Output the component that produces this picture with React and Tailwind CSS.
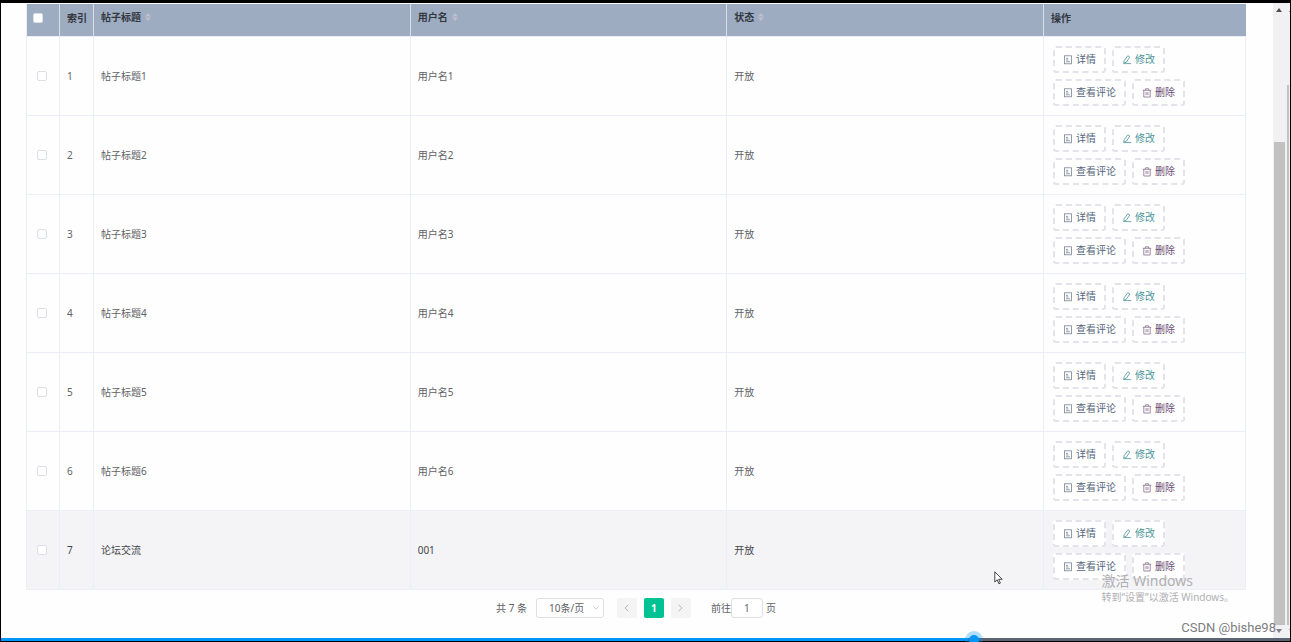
import { useState } from "react";

const initialPosts = [
    { id: 1, title: "帖子标题1", user: "用户名1", status: "开放" },
    { id: 2, title: "帖子标题2", user: "用户名2", status: "开放" },
    { id: 3, title: "帖子标题3", user: "用户名3", status: "开放" },
    { id: 4, title: "帖子标题4", user: "用户名4", status: "开放" },
    { id: 5, title: "帖子标题5", user: "用户名5", status: "开放" },
    { id: 6, title: "帖子标题6", user: "用户名6", status: "开放" },
    { id: 7, title: "论坛交流", user: "001", status: "开放" },
];

function DocIcon() {
    return (
        <svg viewBox="0 0 10 10" className="size-[10px] opacity-80" fill="none" stroke="currentColor" strokeWidth="0.8">
            <rect x="1.5" y="0.8" width="7" height="8" />
            <path d="M3 3.4h2M3 5h2.600M3 6.800h4" />
        </svg>
    );
}

function EditIcon() {
    return (
        <svg viewBox="0 0 10 10" className="size-[10px]" fill="none" stroke="currentColor" strokeWidth="0.8">
            <path d="M5.800.8 7.800 2 4.400 7.200 1.800 8.200 2.100 5.800Z" strokeLinejoin="round" />
            <path d="M1.400 8.600h7.800" />
        </svg>
    );
}

function TrashIcon() {
    return (
        <svg viewBox="0 0 10 10" className="size-[10px] opacity-80" fill="none" stroke="currentColor" strokeWidth="0.8">
            <path d="M.8 2.300h8.400M3.400 2.100V.8h3.200v1.300M1.800 2.300V9h6.400V2.300M4.100 4v3.200M5.900 4v3.200" />
        </svg>
    );
}

function SortIcon() {
    return (
        <svg viewBox="0 0 6 8" className="h-2 w-[6px] text-[#bfc0cc]" fill="currentColor">
            <path d="M3 0 6 3.400H0ZM3 8 0 4.600h6Z" />
        </svg>
    );
}

function ActionButton({ icon, label, color, onClick }) {
    return (
        <button
            type="button"
            onClick={onClick}
            className={`flex h-[27px] items-center gap-[3px] rounded-[3px] border-2 border-dashed border-[#e3e3ea] bg-white px-2 ${color}`}
        >
            {icon}
            {label}
        </button>
    );
}

function SortHeader({ label }) {
    return (
        <th className="border-r border-b border-r-[#d9dfe9] border-b-[#ebeef5] px-[7px] pt-[6px] text-left align-top">
            <button type="button" className="flex items-center gap-1 font-bold leading-[14px]">
                {label}
                <SortIcon />
            </button>
        </th>
    );
}

function ScrollBar({ width, track }) {
    return (
        <div className={`flex shrink-0 flex-col overflow-hidden bg-[#f1f0f3] ${width}`}>
            <svg viewBox="0 0 6 4" className="mt-[5px] ml-[3px] h-1 w-[6px] shrink-0" fill="#505050">
                <path d="M3 0 6 4H0Z" />
            </svg>
            <div className={`mx-px flex-1 bg-[#c1c1c1] ${track}`} />
            <svg viewBox="0 0 6 4" className="mt-1 mb-[9px] ml-[3px] h-1 w-[6px] shrink-0" fill="#808080">
                <path d="M3 4 0 0h6Z" />
            </svg>
        </div>
    );
}

function App() {
    const [posts, setPosts] = useState(initialPosts);
    const [selected, setSelected] = useState([]);
    const [pageSize, setPageSize] = useState("10");
    const [page, setPage] = useState("1");

    const toggle = (id) => {
        setSelected(
            selected.includes(id)
                ? selected.filter((s) => s !== id)
                : [...selected, id]
        );
    };

    const toggleAll = () => {
        setSelected(selected.length === posts.length ? [] : posts.map((p) => p.id));
    };

    const handleDelete = (id) => {
        setPosts(posts.filter((p) => p.id !== id));
    };

    return (
        <div className="relative flex min-h-screen border-x border-t-[3px] border-black bg-[#fefefe] font-['Noto_Sans','Noto_Sans_CJK_SC',sans-serif] text-[10px] text-[#606266]">
            <main className="min-w-0 flex-1 pt-px pr-[27px] pb-6 pl-[25px]">
                <table className="w-full table-fixed border-separate border-spacing-0 border-l border-[#ebeef5]">
                    <colgroup>
                        <col className="w-[33px]" />
                        <col className="w-[34px]" />
                        <col />
                        <col />
                        <col />
                        <col className="w-[202px]" />
                    </colgroup>
                    <thead className="bg-[#9dacc1] text-[#33373f]">
                        <tr className="h-[33px]">
                            <th className="border-r border-b border-r-[#d9dfe9] border-b-[#ebeef5] pb-1 pl-[6px] text-left">
                                <input
                                    type="checkbox"
                                    aria-label="全选"
                                    checked={posts.length > 0 && selected.length === posts.length}
                                    onChange={toggleAll}
                                    className="block size-[10px] appearance-none rounded-[2px] border border-[#dcdfe6] bg-white checked:bg-[#00c292]"
                                />
                            </th>
                            <th className="border-r border-b border-r-[#d9dfe9] border-b-[#ebeef5] pb-1 pl-[7px] text-left whitespace-nowrap">索引</th>
                            <SortHeader label="帖子标题" />
                            <SortHeader label="用户名" />
                            <SortHeader label="状态" />
                            <th className="border-b border-b-[#ebeef5] px-[7px] pb-1 text-left">操作</th>
                        </tr>
                    </thead>
                    <tbody>
                        {posts.map((p) => (
                            <tr
                                key={p.id}
                                className="h-[79px] last:bg-[#f4f4f7] last:text-[#44464a] [&>td]:border-r [&>td]:border-b [&>td]:border-[#ebeef5]"
                            >
                                <td className="pl-[10px]">
                                    <input
                                        type="checkbox"
                                        aria-label={p.title}
                                        checked={selected.includes(p.id)}
                                        onChange={() => toggle(p.id)}
                                        className="block size-[10px] appearance-none rounded-[2px] border border-[#dcdfe6] bg-white checked:bg-[#00c292]"
                                    />
                                </td>
                                <td className="px-[7px]">{p.id}</td>
                                <td className="px-[7px]">{p.title}</td>
                                <td className="px-[7px]">{p.user}</td>
                                <td className="px-[7px]">{p.status}</td>
                                <td className="pl-[9px]">
                                    <div className="flex flex-col gap-[6px]">
                                        <div className="flex gap-[6px]">
                                            <ActionButton icon={<DocIcon />} label="详情" color="text-[#56657c]" />
                                            <ActionButton icon={<EditIcon />} label="修改" color="text-[#4a9499]" />
                                        </div>
                                        <div className="flex gap-[6px]">
                                            <ActionButton icon={<DocIcon />} label="查看评论" color="text-[#56657c]" />
                                            <ActionButton
                                                icon={<TrashIcon />}
                                                label="删除"
                                                color="text-[#6b4a72]"
                                                onClick={() => handleDelete(p.id)}
                                            />
                                        </div>
                                    </div>
                                </td>
                            </tr>
                        ))}
                    </tbody>
                </table>

                <div className="flex items-center justify-center pt-2">
                    <span className="mr-[9px]">共 {posts.length} 条</span>
                    <div className="relative mr-[13px]">
                        <select
                            aria-label="每页条数"
                            value={pageSize}
                            onChange={(e) => setPageSize(e.target.value)}
                            className="block h-5 w-[68px] appearance-none rounded-[3px] border border-[#dcdfe6] bg-white pl-3"
                        >
                            <option value="10">10条/页</option>
                            <option value="20">20条/页</option>
                        </select>
                        <svg viewBox="0 0 6 4" className="pointer-events-none absolute top-2 right-[5px] h-1 w-[6px]" fill="none" stroke="#c0c4cc" strokeWidth="0.8">
                            <path d="m.5.5 2.500 2.700L5.500.5" />
                        </svg>
                    </div>
                    <div className="mr-5 flex gap-[7px]">
                        <button type="button" aria-label="上一页" disabled className="flex h-5 w-5 items-center justify-center rounded-[2px] bg-[#f4f4f5]">
                            <svg viewBox="0 0 5 8" className="h-2 w-[5px]" fill="none" stroke="#b4b8c0">
                                <path d="M4.300.800 1 4l3.300 3.200" />
                            </svg>
                        </button>
                        <button type="button" className="h-5 w-5 rounded-[2px] bg-[#00c292] font-bold text-white">1</button>
                        <button type="button" aria-label="下一页" disabled className="flex h-5 w-5 items-center justify-center rounded-[2px] bg-[#f4f4f5]">
                            <svg viewBox="0 0 5 8" className="h-2 w-[5px]" fill="none" stroke="#b4b8c0">
                                <path d="M.700.800 4 4 .700 7.200" />
                            </svg>
                        </button>
                    </div>
                    <label className="flex items-center">
                        前往
                        <input
                            type="text"
                            value={page}
                            onChange={(e) => setPage(e.target.value)}
                            className="mr-[3px] h-5 w-8 rounded-[3px] border border-[#dcdfe6] bg-white text-center"
                        />
                        页
                    </label>
                </div>
            </main>

            <ScrollBar width="w-[13px]" track="mt-[130px]" />
            <ScrollBar width="w-1" track="mt-[73px]" />

            {/* mouse pointer */}
            <svg viewBox="0 0 9 14" className="absolute top-[568px] left-[993px] h-[14px] w-[9px]" fill="#fff" stroke="#333" strokeWidth="0.9">
                <path d="M.8.8V11l2.400-2.200 1.700 4 1.500-.7-1.700-3.800h3.500Z" />
            </svg>

            {/* system and site watermarks */}
            <div className="pointer-events-none absolute right-14 bottom-[38px] text-[#b0b0b3]">
                <p className="text-[14px] leading-[18px]">激活 Windows</p>
                <p className="text-[10px] leading-[14px]">转到“设置”以激活 Windows。</p>
            </div>
            <p className="pointer-events-none absolute right-[14px] bottom-[6px] font-[Roboto,sans-serif] text-[13px] leading-4 text-[#7d7d80]">
                CSDN @bishe98
            </p>

            {/* player progress */}
            <div className="absolute inset-x-0 bottom-0 flex h-1 items-center border-b border-black bg-[#5c6473]">
                <div className="h-full w-3/4 bg-[#0096fa]" />
                <div className="-ml-[3px] size-[18px] shrink-0 rounded-full bg-[#0096fa]/30 p-1">
                    <div className="size-full rounded-full bg-[#0096fa]" />
                </div>
            </div>
        </div>
    );
}

export default App;
